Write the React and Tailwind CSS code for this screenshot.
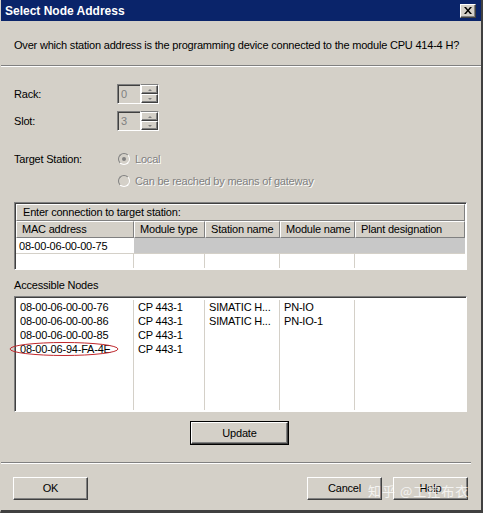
import React from 'react';

const raised = 'border border-t-white border-l-white border-r-[#404040] border-b-[#404040] shadow-[inset_-1px_-1px_0_#808080]';
const header = 'border border-t-white border-l-white border-r-[#808080] border-b-[#808080]';

function SpinBox({ value }) {
  return (
    <div className="flex h-[20px] w-[42px]">
      <div className="flex-1 border border-t-[#808080] border-l-[#808080] border-r-white border-b-white shadow-[inset_1px_1px_0_#404040] bg-[#d4d0c8] pl-[3px] text-[#808080] leading-[18px]">
        {value}
      </div>
      <div className="flex w-[18px] flex-col border-t border-b border-r border-t-[#808080] border-b-white border-r-white">
        <div className={`flex h-[9px] items-center justify-center bg-[#d4d0c8] ${raised}`}>
          <span className="block h-0 w-0 border-x-[2px] border-b-[2px] border-x-transparent border-b-[#808080]" />
        </div>
        <div className={`flex h-[9px] items-center justify-center bg-[#d4d0c8] ${raised}`}>
          <span className="block h-0 w-0 border-x-[2px] border-t-[2px] border-x-transparent border-t-[#808080]" />
        </div>
      </div>
    </div>
  );
}

function Radio({ checked, label }) {
  return (
    <div className="flex items-center gap-[5px] text-[#808080]">
      <span className="flex h-[12px] w-[12px] items-center justify-center rounded-full border border-t-[#808080] border-l-[#808080] border-r-white border-b-white bg-[#d4d0c8]">
        {checked && <span className="block h-[4px] w-[4px] rounded-full bg-[#808080]" />}
      </span>
      <span className="[text-shadow:1px_1px_0_#fff]">{label}</span>
    </div>
  );
}

function Btn({ children, className = '', isDefault }) {
  return (
    <div
      className={`flex items-center justify-center bg-[#d4d0c8] ${isDefault ? 'outline outline-1 outline-black' : ''} ${raised} ${className}`}
    >
      {children}
    </div>
  );
}

const cols = ['w-[118px]', 'w-[71px]', 'w-[75px]', 'w-[75px]', 'flex-1'];
const heads = ['MAC address', 'Module type', 'Station name', 'Module name', 'Plant designation'];

const nodes = [
  ['08-00-06-00-00-76', 'CP 443-1', 'SIMATIC H...', 'PN-IO'],
  ['08-00-06-00-00-86', 'CP 443-1', 'SIMATIC H...', 'PN-IO-1'],
  ['08-00-06-00-00-85', 'CP 443-1', '', ''],
  ['08-00-06-94-FA-4E', 'CP 443-1', '', ''],
];

export default function App() {
  return (
    <div
      className="relative flex h-[513px] w-[483px] flex-col overflow-hidden border-l border-l-[#d4d0c8] border-r-2 border-r-[#404040] border-b-[3px] border-b-[#404040] bg-[#d4d0c8] text-[11px] tracking-[-0.2px] text-black"
      style={{ fontFamily: '"Liberation Sans", Arial, sans-serif' }}
    >
      {/* title bar */}
      <div className="flex h-[21px] shrink-0 items-center justify-between bg-[#0a246a] pl-[4px] pr-[5px]">
        <span className="text-[12px] font-bold tracking-normal text-white">Select Node Address</span>
        <div className={`flex h-[14px] w-[16px] items-center justify-center bg-[#d4d0c8] ${raised}`}>
          <svg width="8" height="7" viewBox="0 0 8 7">
            <path d="M0 0h2l2 2.5L6 0h2L5 3.5 8 7H6L4 4.5 2 7H0l3-3.5z" fill="#000" />
          </svg>
        </div>
      </div>

      {/* question */}
      <div className="h-[45px] shrink-0 border-b border-b-[#808080] pl-[13px] pt-[16px]">
        Over which station address is the programming device connected to the module CPU 414-4 H?
      </div>
      <div className="h-px shrink-0 bg-white" />

      <div className="flex flex-col pl-[13px] pr-[16px]">
        <div className="mt-[17px] flex h-[20px] items-center">
          <span className="w-[103px]">Rack:</span>
          <SpinBox value="0" />
        </div>
        <div className="mt-[7px] flex h-[20px] items-center">
          <span className="w-[103px]">Slot:</span>
          <SpinBox value="3" />
        </div>

        <div className="mt-[21px] flex h-[14px] items-center">
          <span className="w-[104px]">Target Station:</span>
          <Radio checked label="Local" />
        </div>
        <div className="mt-[8px] flex h-[14px] items-center pl-[104px]">
          <Radio label="Can be reached by means of gateway" />
        </div>

        {/* connection table */}
        <div className="mt-[14px] flex h-[68px] w-[453px] flex-col border border-t-[#808080] border-l-[#808080] border-r-white border-b-white shadow-[inset_1px_1px_0_#404040] bg-white p-px">
          <div className={`h-[17px] shrink-0 bg-[#d4d0c8] pl-[6px] leading-[15px] ${header}`}>Enter connection to target station:</div>
          <div className="flex h-[17px] shrink-0">
            {heads.map((h, i) => (
              <div key={h} className={`${cols[i]} ${i === 4 ? '' : 'shrink-0'} bg-[#d4d0c8] pl-[5px] leading-[15px] ${header}`}>
                {h}
              </div>
            ))}
          </div>
          <div className="flex h-[16px] shrink-0 border-b border-b-[#d4d0c8]">
            <div className="w-[118px] shrink-0 pl-[3px] leading-[16px]">08-00-06-00-00-75</div>
            <div className="flex-1 bg-[#c8c8c8]" />
          </div>
          <div className="flex flex-1">
            {cols.map((c, i) => (
              <div key={i} className={`${c} ${i === 4 ? '' : 'shrink-0 border-r border-r-[#d4d0c8]'}`} />
            ))}
          </div>
        </div>

        <div className="mt-[8px] flex h-[14px] items-center">Accessible Nodes</div>

        {/* accessible nodes list */}
        <div className="relative mt-[4px] flex h-[116px] w-[453px] border border-t-[#808080] border-l-[#808080] border-r-white border-b-white shadow-[inset_1px_1px_0_#404040] bg-white p-px pt-[3px]">
          {cols.map((c, i) => (
            <div
              key={i}
              className={`${c} ${i === 4 ? '' : 'shrink-0 border-r border-r-[#d4d0c8]'} flex flex-col pl-[4px] leading-[14px]`}
            >
              {i < 4 && nodes.map((n, j) => <div key={j} className="h-[14px] whitespace-nowrap">{n[i]}</div>)}
            </div>
          ))}
          <svg className="pointer-events-none absolute left-[-7px] top-[44px]" width="112" height="16" viewBox="0 0 112 16">
            <ellipse cx="56" cy="8" rx="54" ry="6.5" fill="none" stroke="#c0282d" strokeWidth="1" />
          </svg>
        </div>

        <div className="mt-[10px] flex justify-center">
          <Btn isDefault className="h-[22px] w-[97px]">Update</Btn>
        </div>
      </div>

      {/* separator */}
      <div className="mt-[18px] h-px w-[470px] bg-[#808080]" />
      <div className="h-px w-[470px] bg-white" />

      <div className="mt-[13px] flex h-[23px] items-stretch pl-[12px] pr-[13px]">
        <Btn className="w-[75px]">OK</Btn>
        <div className="flex-1" />
        <Btn className="w-[75px]">Cancel</Btn>
        <Btn className="ml-[11px] w-[75px]">Help</Btn>
      </div>

      <div
        className="pointer-events-none absolute left-[367px] top-[481px] text-[13px] tracking-[1px] text-white/75"
        style={{ fontFamily: '"Noto Sans CJK SC", sans-serif' }}
      >
        知乎 @工控布衣
      </div>
    </div>
  );
}
